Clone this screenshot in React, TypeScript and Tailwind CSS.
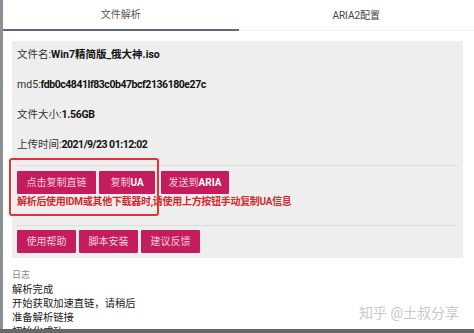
import React from "react";

const F = "font-['Roboto','Noto_Sans_CJK_SC',sans-serif]";

function Btn({ w, children }: { w: string; children: React.ReactNode }) {
  return (
    <div
      className={`${w} h-[23px] bg-[#c41c5c] text-[#f5cedc] text-[10px] flex items-center justify-center rounded-[1px] shrink-0`}
    >
      {children}
    </div>
  );
}

export default function App() {
  return (
    <div className={`w-[474px] h-[333px] bg-white flex flex-col overflow-hidden relative ${F}`}>
      <div className="flex h-[329px]">
        <div className="w-[3px] bg-[#8b9097] shrink-0" />
        <div className="flex-1 flex flex-col overflow-hidden">
          {/* tabs */}
          <div className="flex h-[31px] shrink-0">
            <div className="flex-1 flex flex-col">
              <div className="flex-1 flex items-center justify-center text-[10px] text-[#555]">文件解析</div>
              <div className="h-[2px] bg-[#5a6a80]" />
            </div>
            <div className="flex-1 flex flex-col">
              <div className="flex-1 flex items-center justify-center text-[10px] text-[#444]">ARIA2配置</div>
              <div className="h-[1px] bg-[#f2f2f2]" />
            </div>
          </div>

          {/* panel */}
          <div className="ml-[9px] mr-[11px] mt-[10px] bg-[#eeeeee] px-[5px] pt-[6px] pb-[5px]">
            <div className="flex flex-col gap-[14px] text-[10.5px] leading-[16px] text-[#333]">
              <div>
                文件名:<span className="font-bold text-[#111]">Win7精简版_俄大神.iso</span>
              </div>
              <div>
                md5:<span className="font-bold text-[#111] tracking-[-0.45px]">fdb0c4841lf83c0b47bcf2136180e27c</span>
              </div>
              <div>
                文件大小:<span className="font-bold text-[#111] tracking-[-0.3px]">1.56GB</span>
              </div>
              <div>
                上传时间:<span className="font-bold text-[#111] tracking-[-0.5px]">2021/9/23 01:12:02</span>
              </div>
            </div>
            <div className="mt-[12px] h-[1px] bg-[#dcdcdc]" />
            <div className="mt-[5px] flex">
              <Btn w="w-[79px]">点击复制直链</Btn>
              <div className="w-[3px]" />
              <Btn w="w-[56px]">
                复制<span className="font-bold text-white">UA</span>
              </Btn>
              <div className="w-[6px]" />
              <Btn w="w-[68px]">
                发送到<span className="font-bold text-white">ARIA</span>
              </Btn>
            </div>
            <div className="mt-[1px] text-[10px] leading-[14px] font-bold text-[#d8262a] tracking-[-0.3px]">
              解析后使用IDM或其他下载器时,请使用上方按钮手动复制UA信息
            </div>
            <div className="mt-[16px] h-[1px] bg-[#dcdcdc]" />
            <div className="mt-[4px] flex gap-[3px]">
              <Btn w="w-[59px]">使用帮助</Btn>
              <Btn w="w-[59px]">脚本安装</Btn>
              <Btn w="w-[59px]">建议反馈</Btn>
            </div>
          </div>

          {/* log */}
          <div className="ml-[9px] mt-[11px] text-[9px] leading-[12px] text-[#888]">日志</div>
          <div className="ml-[9px] mt-[2px] text-[10.3px] leading-[14px] text-[#222] flex flex-col">
            <div>解析完成</div>
            <div>开始获取加速直链，请稍后</div>
            <div>准备解析链接</div>
            <div>初始化成功</div>
          </div>
        </div>
      </div>
      <div className="h-[4px] bg-[#686868] shrink-0" />

      {/* annotation box */}
      <div className="absolute left-[9px] top-[158px] w-[150px] h-[58px] border-2 border-[#e5342f] rounded-[3px]" />
      {/* watermark */}
      <div className="absolute left-[359px] top-[304px] text-[14px] leading-[18px] text-[#c9c9c9] whitespace-nowrap [text-shadow:0_0_1px_#fff]">
        知乎 @土叔分享
      </div>
    </div>
  );
}
